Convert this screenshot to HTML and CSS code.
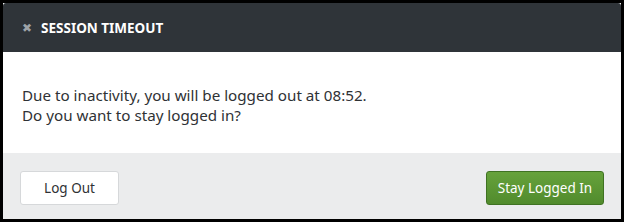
FILE: index.html
```html
<!DOCTYPE html>
<html lang="en">
<head>
  <meta charset="UTF-8" />
  <title>Session Timeout</title>
  <link rel="stylesheet" href="styles.css">
</head>
<body>
  <div class="frame">
    <div class="dialog">
      <div class="dialog-header">
        <span class="close">&#x2716;</span>
        <h2>SESSION TIMEOUT</h2>
      </div>
      <div class="dialog-body">
        <p>Due to inactivity, you will be logged out at 08:52.<br>Do you want to stay logged in?</p>
      </div>
      <div class="dialog-footer">
        <button class="btn btn-default">Log Out</button>
        <button class="btn btn-primary">Stay Logged In</button>
      </div>
    </div>
  </div>
</body>
</html>
```

FILE: styles.css
```css
body {
  margin: 0;
  background: white;
  font-family: "Noto Sans", "Open Sans", sans-serif;
  color: #2f3235;
}

.frame {
  width: 618px;
  height: 216px;
  border: 3px solid #000;
}

.dialog {
  height: 100%;
  display: flex;
  flex-direction: column;
  background: white;
  border-radius: 3px 3px 0 0;
  overflow: hidden;
}

.dialog-header {
  height: 49px;
  background: #2f3439;
  display: flex;
  align-items: center;
  padding: 0 19px;
  gap: 9px;
}

.close {
  color: #9ea3a8;
  font-size: 12px;
  line-height: 1;
  margin-top: 1px;
}

h2 {
  margin: 0;
  color: white;
  font-size: 13.5px;
  font-weight: bold;
}

.dialog-body {
  height: 101px;
  padding: 0 19px;
  display: flex;
  align-items: center;
}

.dialog-body p {
  margin: 4px 0 0;
  font-size: 15.2px;
  line-height: 20px;
}

.dialog-footer {
  flex: 1;
  background: #ebeced;
  display: flex;
  justify-content: space-between;
  align-items: flex-start;
  padding: 18px 17px 0 17px;
}

.btn {
  height: 34px;
  font-family: inherit;
  font-size: 13.5px;
  border-radius: 3px;
  cursor: pointer;
}

.btn-default {
  width: 99px;
  background: white;
  border: 1px solid #d6d8da;
  color: #2f3235;
}

.btn-primary {
  width: 118px;
  background: linear-gradient(#66a23b, #518b2d);
  border: 1px solid #3f7222;
  color: white;
}
```
